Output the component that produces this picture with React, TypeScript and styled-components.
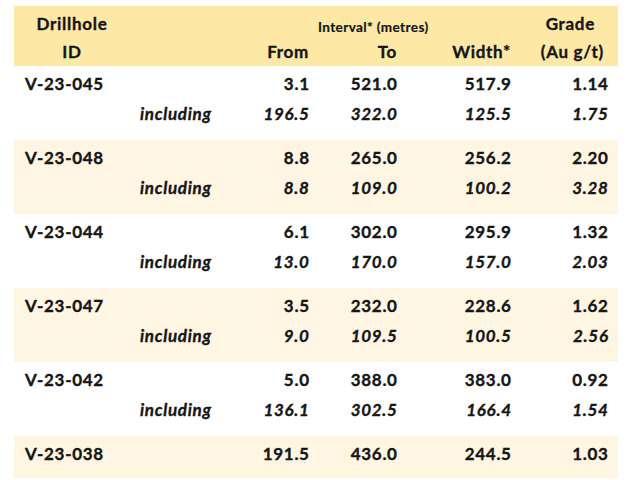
import React from "react";
import styled, { createGlobalStyle } from "styled-components";

const Global = createGlobalStyle`
  html, body { margin: 0; padding: 0; background: #ffffff; }
  body { font-family: Lato, "Open Sans", "Liberation Sans", sans-serif; color: #161616; }
`;

const COLS = "116px 100px 79px 88px 114px 107px";

const Table = styled.div`
  width: 604px;
  margin: 6px 0 0 14px;
  font-weight: 700;
  font-size: 17px;
  letter-spacing: 0.7px;
  -webkit-text-stroke: 0.35px currentColor;
`;

const Header = styled.div`
  display: grid;
  grid-template-columns: ${COLS};
  grid-template-rows: 28px 28px;
  padding-top: 4px;
  background: #fde8a6;
  line-height: 28px;
`;

const HeadCell = styled.div<{ $col: string; $row: number; $align?: string; $pr?: number }>`
  grid-column: ${(p) => p.$col};
  grid-row: ${(p) => p.$row};
  text-align: ${(p) => p.$align || "right"};
  padding-right: ${(p) => p.$pr ?? 0}px;
  white-space: nowrap;
`;

const SubHead = styled.div`
  grid-column: 3 / 6;
  grid-row: 1;
  font-size: 13.5px;
  letter-spacing: 0.4px;
  -webkit-text-stroke: 0.2px currentColor;
  padding: 3px 0 0 88px;
  white-space: nowrap;
`;

const Group = styled.div<{ $tint: boolean; $last?: boolean }>`
  display: grid;
  grid-template-columns: ${COLS};
  grid-auto-rows: 30px;
  line-height: 30px;
  padding: 3px 0 ${(p) => (p.$last ? 9 : 11)}px;
  background: ${(p) => (p.$tint ? "#fef6e3" : "#ffffff")};
`;

const IdCell = styled.div`
  padding-left: 11px;
  white-space: nowrap;
`;

const IncCell = styled.div`
  grid-column: 2;
  padding-left: 10px;
  font-style: italic;
  white-space: nowrap;
`;

const Num = styled.div<{ $italic?: boolean; $pr?: number }>`
  text-align: right;
  font-style: ${(p) => (p.$italic ? "italic" : "normal")};
  padding-right: ${(p) => p.$pr ?? 0}px;
  margin-right: -0.7px;
  white-space: nowrap;
`;

type G = { id: string; main: string[]; inc?: string[] };

const groups: G[] = [
  { id: "V-23-045", main: ["3.1", "521.0", "517.9", "1.14"], inc: ["196.5", "322.0", "125.5", "1.75"] },
  { id: "V-23-048", main: ["8.8", "265.0", "256.2", "2.20"], inc: ["8.8", "109.0", "100.2", "3.28"] },
  { id: "V-23-044", main: ["6.1", "302.0", "295.9", "1.32"], inc: ["13.0", "170.0", "157.0", "2.03"] },
  { id: "V-23-047", main: ["3.5", "232.0", "228.6", "1.62"], inc: ["9.0", "109.5", "100.5", "2.56"] },
  { id: "V-23-042", main: ["5.0", "388.0", "383.0", "0.92"], inc: ["136.1", "302.5", "166.4", "1.54"] },
  { id: "V-23-038", main: ["191.5", "436.0", "244.5", "1.03"] },
];

const Nums = ({ vals, italic }: { vals: string[]; italic?: boolean }) => (
  <>
    {vals.map((v, i) => (
      <Num key={i} $italic={italic} $pr={i === 3 ? 10 : 0}>
        {v}
      </Num>
    ))}
  </>
);

export default function App() {
  return (
    <>
      <Global />
      <Table>
        <Header>
          <HeadCell $col="1" $row={1} $align="center">Drillhole</HeadCell>
          <HeadCell $col="1" $row={2} $align="center">ID</HeadCell>
          <SubHead>Interval* (metres)</SubHead>
          <HeadCell $col="3" $row={2}>From</HeadCell>
          <HeadCell $col="4" $row={2}>To</HeadCell>
          <HeadCell $col="5" $row={2}>Width*</HeadCell>
          <HeadCell $col="6" $row={1} $pr={23}>Grade</HeadCell>
          <HeadCell $col="6" $row={2} $pr={14}>(Au g/t)</HeadCell>
        </Header>
        {groups.map((g, i) => (
          <Group key={g.id} $tint={i % 2 === 1} $last={!g.inc}>
            <IdCell>{g.id}</IdCell>
            <div />
            <Nums vals={g.main} />
            {g.inc && (
              <>
                <div />
                <IncCell>including</IncCell>
                <Nums vals={g.inc} italic />
              </>
            )}
          </Group>
        ))}
      </Table>
    </>
  );
}
